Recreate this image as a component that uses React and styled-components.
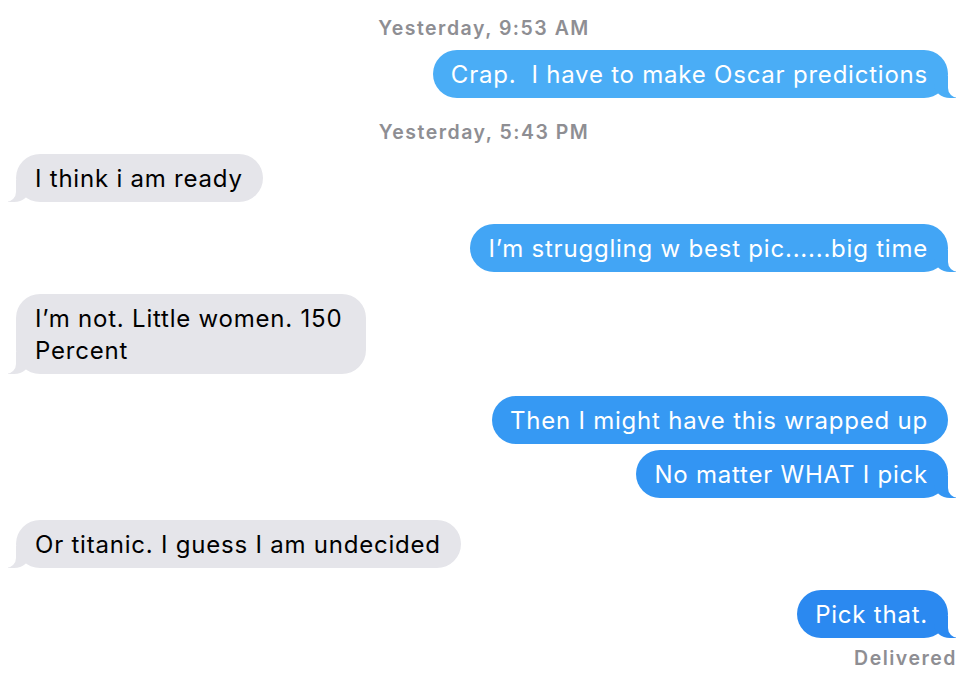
import React from "react";
import styled, { createGlobalStyle, css } from "styled-components";

const GlobalStyle = createGlobalStyle`
  html, body {
    margin: 0;
    padding: 0;
    background: #ffffff;
  }
  body {
    font-family: Inter, "Noto Sans", "Liberation Sans", sans-serif;
    -webkit-font-smoothing: antialiased;
  }
`;

const Thread = styled.div`
  width: 960px;
  height: 680px;
  box-sizing: border-box;
  padding: 16px 12px 0 16px;
  display: flex;
  flex-direction: column;
  background: #ffffff;
  overflow: hidden;
`;

const Timestamp = styled.div`
  align-self: center;
  height: 24px;
  line-height: 24px;
  margin-left: 4px;
  font-size: 19.5px;
  font-weight: 600;
  letter-spacing: 1.5px;
  color: #8e8e93;
  margin-bottom: 10px;
`;

const Row = styled.div`
  display: flex;
  justify-content: ${(p) => (p.$sent ? "flex-end" : "flex-start")};
  margin-bottom: ${(p) => p.$gap}px;
`;

const Bubble = styled.div`
  position: relative;
  box-sizing: border-box;
  max-width: ${(p) => p.$max || 620}px;
  padding: 9px 20px 7px ${(p) => (p.$sent ? 18 : 19)}px;
  border-radius: 24px;
  font-size: 24px;
  line-height: 32px;
  letter-spacing: 0.78px;
  white-space: pre-wrap;
  background: ${(p) => p.$bg};
  color: ${(p) => (p.$sent ? "#ffffff" : "#000000")};
  z-index: 0;

  ${(p) =>
    p.$tail &&
    (p.$sent
      ? css`
          &::before {
            content: "";
            position: absolute;
            z-index: -1;
            bottom: 0;
            right: -8px;
            width: 22px;
            height: 22px;
            background: ${p.$bg};
            border-bottom-left-radius: 16px 14px;
          }
          &::after {
            content: "";
            position: absolute;
            z-index: -1;
            bottom: 0;
            right: -12px;
            width: 12px;
            height: 22px;
            background: #ffffff;
            border-bottom-left-radius: 10px;
          }
        `
      : css`
          &::before {
            content: "";
            position: absolute;
            z-index: -1;
            bottom: 0;
            left: -8px;
            width: 22px;
            height: 22px;
            background: ${p.$bg};
            border-bottom-right-radius: 16px 14px;
          }
          &::after {
            content: "";
            position: absolute;
            z-index: -1;
            bottom: 0;
            left: -12px;
            width: 12px;
            height: 22px;
            background: #ffffff;
            border-bottom-right-radius: 10px;
          }
        `)}
`;

const Status = styled.div`
  align-self: flex-end;
  margin-right: -9px;
  margin-top: -14px;
  height: 24px;
  line-height: 24px;
  font-size: 19.5px;
  font-weight: 600;
  letter-spacing: 1.5px;
  color: #8e8e93;
`;

const GRAY = "#e5e5ea";

const items = [
  { type: "time", text: "Yesterday, 9:53 AM" },
  { type: "msg", sent: true, text: "Crap.  I have to make Oscar predictions", bg: "#4aadf6", gap: 22 },
  { type: "time", text: "Yesterday, 5:43 PM" },
  { type: "msg", sent: false, text: "I think i am ready", gap: 22 },
  { type: "msg", sent: true, text: "I’m struggling w best pic......big time", bg: "#42a5f5", gap: 22 },
  { type: "msg", sent: false, text: "I’m not. Little women. 150 Percent", max: 350, gap: 22 },
  { type: "msg", sent: true, text: "Then I might have this wrapped up", bg: "#3699f3", gap: 6, noTail: true },
  { type: "msg", sent: true, text: "No matter WHAT I pick", bg: "#3395f3", gap: 22 },
  { type: "msg", sent: false, text: "Or titanic. I guess I am undecided", gap: 22 },
  { type: "msg", sent: true, text: "Pick that.", bg: "#2b89f0", gap: 22 },
];

export default function App() {
  return (
    <>
      <GlobalStyle />
      <Thread>
        {items.map((it, i) =>
          it.type === "time" ? (
            <Timestamp key={i}>{it.text}</Timestamp>
          ) : (
            <Row key={i} $sent={it.sent} $gap={it.gap}>
              <Bubble
                $sent={it.sent}
                $bg={it.sent ? it.bg : GRAY}
                $tail={!it.noTail}
                $max={it.max}
              >
                {it.text}
              </Bubble>
            </Row>
          )
        )}
        <Status>Delivered</Status>
      </Thread>
    </>
  );
}
